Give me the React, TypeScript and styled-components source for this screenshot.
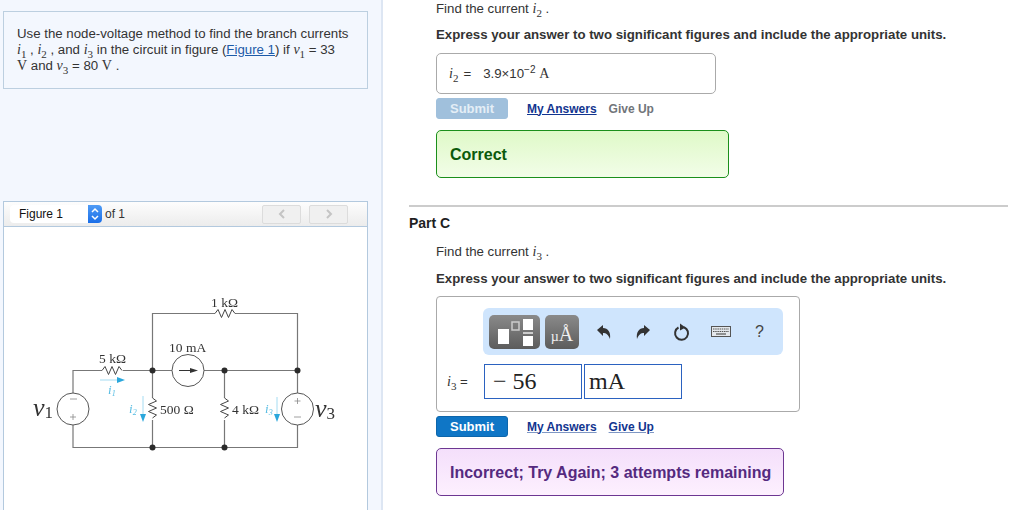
import React from 'react';
import styled, { createGlobalStyle } from 'styled-components';

const Global = createGlobalStyle`
  html, body {
    margin: 0;
    padding: 0;
    height: 510px;
    overflow: hidden;
    background: #fff;
    font-family: "Liberation Sans", Arial, sans-serif;
    font-size: 13.25px;
    line-height: 16px;
    color: #333;
  }
  * { box-sizing: border-box; }
`;

const M = ({ v, n }: { v: string; n?: number }) => (
  <Var>
    {v}
    {n !== undefined && <sub>{n}</sub>}
  </Var>
);

function Resistor({ x, y, vertical }: { x: number; y: number; vertical?: boolean }) {
  // zigzag drawn along x from the given start, turned when it sits on a vertical branch
  return (
    <path
      transform={vertical ? `translate(${x} ${y}) rotate(90)` : `translate(${x} ${y})`}
      d="M0 0L3 -4L6.500 4L10 -4L13.500 4L17 -4L20 0"
      fill="none"
      stroke="#444"
      strokeWidth="1"
    />
  );
}

function Circuit() {
  return (
    <CircuitSvg viewBox="20 285 330 175" width="330" height="175">
      <path
        d="M152.500 370.500V313.500H215M235 313.500H297.500V393M73 393V370.500H102M123 370.500H172M204 370.500H297.500M152.500 370.500V398M224.500 370.500V398M152.500 420V447.500M224.500 420V447.500M73 425V447.500H297.500V425"
        fill="none"
        stroke="#777"
        strokeWidth="1.200"
      />
      <Resistor x={215} y={313.5} />
      <Resistor x={102} y={370.5} />
      <Resistor x={152.5} y={398} vertical />
      <Resistor x={224.5} y={398} vertical />

      <circle cx="73" cy="409" r="16" fill="#fff" stroke="#555" strokeWidth="1" />
      <circle cx="188" cy="370.500" r="16" fill="#fff" stroke="#555" strokeWidth="1" />
      <circle cx="297.500" cy="409" r="16" fill="#fff" stroke="#555" strokeWidth="1" />

      <path d="M179 370.500H192" stroke="#333" strokeWidth="1" />
      <path d="M190 368L198 370.500L190 373Z" fill="#333" />
      <path d="M70 399H77M297.500 398V404M294.500 401H300.500M294 417H301M73 414V420M70 417H76" stroke="#888" strokeWidth="0.800" fill="none" />

      <circle cx="152.500" cy="370.500" r="3" fill="#2b2b2b" />
      <circle cx="224.500" cy="370.500" r="3" fill="#2b2b2b" />
      <circle cx="297.500" cy="370.500" r="3" fill="#2b2b2b" />
      <circle cx="152.500" cy="447.500" r="3" fill="#2b2b2b" />
      <circle cx="224.500" cy="447.500" r="3" fill="#2b2b2b" />

      <path d="M100 380H118" stroke="#a5dcf2" strokeWidth="1" />
      <path d="M117 377L125 380L117 383Z" fill="#2aa7dc" />
      <path d="M143 396V414M277 397V414" stroke="#a5dcf2" strokeWidth="1" />
      <path d="M140 414H146L143 422ZM274 414H280L277 422Z" fill="#2aa7dc" />

      <CircuitLabel x="211" y="307">1 kΩ</CircuitLabel>
      <CircuitLabel x="99" y="362.500">5 kΩ</CircuitLabel>
      <CircuitLabel x="169" y="351.500">10 mA</CircuitLabel>
      <CircuitLabel x="160" y="414">500 Ω</CircuitLabel>
      <CircuitLabel x="232" y="414">4 kΩ</CircuitLabel>
      <CurrentLabel x="108" y="394">i<tspan dy="2" fontSize="8">1</tspan></CurrentLabel>
      <CurrentLabel x="129" y="413">i<tspan dy="2" fontSize="8">2</tspan></CurrentLabel>
      <CurrentLabel x="265" y="413">i<tspan dy="2" fontSize="8">3</tspan></CurrentLabel>
      <SourceLabel x="33" y="416">v<tspan dy="2" fontStyle="normal" fontSize="17">1</tspan></SourceLabel>
      <SourceLabel x="315" y="417">v<tspan dy="2" fontStyle="normal" fontSize="17">3</tspan></SourceLabel>
    </CircuitSvg>
  );
}

function ToolIcons() {
  return (
    <>
      <ToolSlot>
        <svg viewBox="0 0 16 16" width="16" height="16">
          <path d="M1 6L7 1V4C12 4 15 8 14 15C12 10 10 9 7 9V12Z" fill="#333" />
        </svg>
      </ToolSlot>
      <ToolSlot>
        <svg viewBox="0 0 16 16" width="16" height="16">
          <path d="M15 6L9 1V4C4 4 1 8 2 15C4 10 6 9 9 9V12Z" fill="#333" />
        </svg>
      </ToolSlot>
      <ToolSlot>
        <svg viewBox="0 0 18 18" width="18" height="18">
          <path d="M11 4.200A6.500 6.500 0 1 1 5.500 4.500" fill="none" stroke="#333" strokeWidth="2" />
          <path d="M7 0.500L12.500 4.500L7 7.500Z" fill="#333" />
        </svg>
      </ToolSlot>
      <ToolSlot>
        <svg viewBox="0 0 20 11" width="20" height="11">
          <rect x="0.500" y="0.500" width="19" height="10" fill="#e4e8ec" stroke="#555" />
          <path d="M2 3H18M2 5.500H18" stroke="#555" strokeWidth="1.200" strokeDasharray="1.500 0.700" />
          <path d="M5 8H15" stroke="#555" strokeWidth="1.200" />
        </svg>
      </ToolSlot>
      <ToolSlot>
        <Help>?</Help>
      </ToolSlot>
    </>
  );
}

export default function App() {
  return (
    <>
      <Global />
      <Page>
        <Side>
          <Problem>
            Use the node-voltage method to find the branch currents
            <br />
            <M v="i" n={1} /> , <M v="i" n={2} /> , and <M v="i" n={3} /> in the circuit in figure (
            <FigureLink href="#">Figure 1</FigureLink>) if <M v="v" n={1} /> = 33
            <br />
            <Unit>V</Unit> and <M v="v" n={3} /> = 80 <Unit>V</Unit> .
          </Problem>
          <FigurePanel>
            <FigureBar>
              <FigureSelect>
                <span>Figure 1</span>
                <SelectArrows>
                  <svg viewBox="0 0 14 18" width="14" height="18">
                    <path d="M4 7L7 4L10 7M4 11L7 14L10 11" fill="none" stroke="#fff" strokeWidth="1.500" />
                  </svg>
                </SelectArrows>
              </FigureSelect>
              <OfCount>of 1</OfCount>
              <NavButton aria-label="previous">
                <svg viewBox="0 0 8 10" width="8" height="10"><path d="M6 1L2 5L6 9" fill="none" stroke="#c4c4c4" strokeWidth="2" /></svg>
              </NavButton>
              <NavButton aria-label="next">
                <svg viewBox="0 0 8 10" width="8" height="10"><path d="M2 1L6 5L2 9" fill="none" stroke="#c4c4c4" strokeWidth="2" /></svg>
              </NavButton>
            </FigureBar>
            <FigureBody>
              <Circuit />
            </FigureBody>
          </FigurePanel>
        </Side>

        <Main>
          <Indented>
            <Prompt>Find the current <M v="i" n={2} /> .</Prompt>
            <Instruction>Express your answer to two significant figures and include the appropriate units.</Instruction>
            <AnswerBox>
              <M v="i" n={2} /><AnswerEq>=</AnswerEq>
              <AnswerValue>3.9×10<sup>−2</sup> <Unit>A</Unit></AnswerValue>
            </AnswerBox>
            <Actions>
              <SubmitButton disabled>Submit</SubmitButton>
              <ActionLink href="#">My Answers</ActionLink>
              <MutedAction>Give Up</MutedAction>
            </Actions>
            <Feedback $tone="correct">Correct</Feedback>
          </Indented>

          <PartRule />
          <PartTitle>Part C</PartTitle>

          <Indented>
            <PartPrompt>Find the current <M v="i" n={3} /> .</PartPrompt>
            <PartInstruction>Express your answer to two significant figures and include the appropriate units.</PartInstruction>
            <EditorBox>
              <EditorTools>
                <ToolButton $w={51}>
                  <svg viewBox="0 0 40 28" width="40" height="28">
                    <rect x="3" y="11" width="11" height="15" fill="#fff" />
                    <rect x="17" y="4" width="7" height="8" fill="none" stroke="#ccc" strokeWidth="1.500" />
                    <rect x="28" y="1" width="10" height="11" fill="#fff" />
                    <rect x="28" y="14" width="10" height="2" fill="#ccc" />
                    <rect x="28" y="18" width="10" height="10" fill="#fff" />
                  </svg>
                </ToolButton>
                <ToolButton $w={34}><UnitGlyph><small>µ</small>Å</UnitGlyph></ToolButton>
                <ToolIcons />
              </EditorTools>
              <EditorRow>
                <EditorLabel><M v="i" n={3} /> =</EditorLabel>
                <MathField>− 56</MathField>
                <MathField $tight>mA</MathField>
              </EditorRow>
            </EditorBox>
            <Actions>
              <SubmitButton>Submit</SubmitButton>
              <ActionLink href="#" $lined>My Answers</ActionLink>
              <ActionLink href="#" $lined>Give Up</ActionLink>
            </Actions>
            <Feedback $tone="incorrect">Incorrect; Try Again; 3 attempts remaining</Feedback>
          </Indented>
        </Main>
      </Page>
    </>
  );
}

const Page = styled.div`
  display: flex;
  width: 1024px;
  height: 510px;
  overflow: hidden;
`;

const Side = styled.aside`
  display: flex;
  flex-direction: column;
  flex: none;
  width: 383px;
  height: 510px;
  padding: 11px 0 0 3px;
  background: #f3f7fe;
  border-right: 2px solid #dde6f3;
`;

const Problem = styled.div`
  width: 365px;
  height: 78px;
  padding: 14px 13px 0;
  white-space: nowrap;
  border: 1px solid #bccfe0;
`;

const Var = styled.span`
  font-family: "Liberation Serif", serif;
  font-style: italic;
  font-size: 14px;

  sub {
    font-style: normal;
    font-size: 11px;
    line-height: 0;
  }
`;

const Unit = styled.span`
  font-family: "Liberation Serif", serif;
  font-size: 14px;
`;

const FigureLink = styled.a`
  color: #1c5aa8;
  text-decoration: underline;
`;

const FigurePanel = styled.section`
  flex: 1;
  width: 365px;
  margin-top: 112px;
  background: #fff;
  border: 1px solid #b3c9de;
  border-bottom: 0;
`;

const FigureBar = styled.div`
  display: flex;
  align-items: center;
  height: 25px;
  padding: 0 19px 0 6px;
  background: linear-gradient(#fdfdfd, #ececec);
  border-bottom: 1px solid #b3c9de;
`;

const FigureSelect = styled.div`
  display: flex;
  align-items: center;
  justify-content: space-between;
  width: 92px;
  height: 18px;
  padding-left: 9px;
  color: #111;
  font-size: 12px;
  background: #fff;
  border-radius: 4px;
  overflow: hidden;
`;

const SelectArrows = styled.span`
  display: flex;
  width: 14px;
  height: 18px;
  background: linear-gradient(#4f9bf5, #1a6ee8);
`;

const OfCount = styled.span`
  flex: 1;
  margin-left: 3px;
  font-size: 12px;
`;

const NavButton = styled.button`
  display: flex;
  align-items: center;
  justify-content: center;
  width: 39px;
  height: 19px;
  margin-left: 8px;
  padding: 0;
  background: #f0f0f0;
  border: 1px solid #dcdcdc;
  border-radius: 2px;
`;

const FigureBody = styled.div`
  padding: 58px 0 0 16px;
`;

const CircuitSvg = styled.svg`
  display: block;
  filter: blur(0.35px);
`;

const CircuitLabel = styled.text`
  font-family: "Liberation Serif", serif;
  font-size: 13.5px;
  fill: #333;
`;

const CurrentLabel = styled.text`
  font-family: "Liberation Serif", serif;
  font-style: italic;
  font-size: 13px;
  fill: #58bde3;
`;

const SourceLabel = styled.text`
  font-family: "Liberation Serif", serif;
  font-style: italic;
  font-size: 26px;
  fill: #333;
`;

const Main = styled.main`
  flex: 1;
  padding: 0 16px 0 26px;
`;

const Indented = styled.div`
  padding-left: 27px;
`;

const Prompt = styled.div`
  height: 16px;
  line-height: 18px;
`;

const Instruction = styled.div`
  height: 16px;
  margin-top: 10px;
  font-weight: bold;
  line-height: 18px;
  white-space: nowrap;
`;

const AnswerBox = styled.div`
  display: flex;
  align-items: center;
  width: 280px;
  height: 41px;
  margin-top: 11px;
  padding-left: 12px;
  background: #fff;
  border: 1px solid #aaa;
  border-radius: 5px;
`;

const AnswerEq = styled.span`
  margin-left: 5px;
`;

const AnswerValue = styled.span`
  margin-left: 12px;

  sup {
    font-size: 10px;
    line-height: 0;
  }
`;

const Actions = styled.div`
  display: flex;
  align-items: center;
  height: 21px;
  margin-top: 4px;
`;

const SubmitButton = styled.button`
  width: 72px;
  height: 21px;
  margin-right: 19px;
  padding: 0;
  color: #fff;
  font: bold 13px "Liberation Sans", Arial, sans-serif;
  background: #0f76c6;
  border: 1px solid #0d66ab;
  border-radius: 3px;

  &:disabled {
    color: #e4eef6;
    background: #a0c0dc;
    border-color: #a0c0dc;
  }
`;

const ActionLink = styled.a<{ $lined?: boolean }>`
  margin-right: 12px;
  color: #12358f;
  font-size: 12px;
  font-weight: bold;
  text-decoration: underline;
  text-decoration-color: ${({ $lined }) => ($lined ? '#7f97c4' : '#12358f')};
`;

const MutedAction = styled.span`
  color: #71757a;
  font-size: 12px;
  font-weight: bold;
`;

const Feedback = styled.div<{ $tone: 'correct' | 'incorrect' }>`
  display: flex;
  align-items: center;
  height: 48px;
  margin-top: 11px;
  padding: 2px 13px 0;
  font-size: 16px;
  font-weight: bold;
  white-space: nowrap;
  border-radius: 5px;
  ${({ $tone }) =>
    $tone === 'correct'
      ? `
    width: 293px;
    color: #0b5a0b;
    background: linear-gradient(#dff9c8, #f2fde8);
    border: 1px solid #1b8f1b;
  `
      : `
    width: 348px;
    color: #552a7f;
    background: linear-gradient(#f4dffb, #fdf0fe);
    border: 1px solid #6d3792;
  `}
`;

const PartRule = styled.hr`
  height: 2px;
  margin: 27px 0 0;
  background: #ccc;
  border: 0;
`;

const PartTitle = styled.h3`
  height: 16px;
  margin: 7px 0 0;
  color: #1f1f1f;
  font-size: 14px;
  font-weight: bold;
  line-height: 18px;
`;

const PartPrompt = styled(Prompt)`
  margin-top: 13px;
`;

const PartInstruction = styled(Instruction)`
  margin-top: 11px;
`;

const EditorBox = styled.div`
  width: 364px;
  height: 116px;
  margin-top: 10px;
  padding: 11px 0 0 46px;
  background: #fff;
  border: 1px solid #aaa;
  border-radius: 4px;
`;

const EditorTools = styled.div`
  display: flex;
  align-items: center;
  width: 300px;
  height: 47px;
  padding-left: 6px;
  background: #cfe5fd;
  border-radius: 6px;
`;

const ToolButton = styled.div<{ $w: number }>`
  display: flex;
  align-items: center;
  justify-content: center;
  width: ${({ $w }) => $w}px;
  height: 34px;
  margin-right: 5px;
  background: linear-gradient(#8a8a8a, #5c5c5c);
  border-radius: 5px;
`;

const UnitGlyph = styled.span`
  padding-top: 7px;
  color: #f0f0f0;
  font-family: "Liberation Serif", serif;
  font-size: 20px;

  small {
    font-size: 14px;
  }
`;

const ToolSlot = styled.span`
  display: flex;
  align-items: center;
  justify-content: center;
  flex: none;
  width: 39px;
`;

const Help = styled.span`
  font-size: 16px;
  color: #444;
`;

const EditorRow = styled.div`
  display: flex;
  align-items: center;
  height: 35px;
  margin: 9px 0 0 -36px;
`;

const EditorLabel = styled.span`
  flex: none;
  width: 37px;
  white-space: nowrap;
`;

const MathField = styled.div<{ $tight?: boolean }>`
  width: 98px;
  height: 35px;
  margin-right: 2px;
  padding-left: ${({ $tight }) => ($tight ? 4 : 8)}px;
  color: #222;
  font-family: "Liberation Serif", serif;
  font-size: 24px;
  line-height: 33px;
  border: 1px solid #2b62c0;
`;
